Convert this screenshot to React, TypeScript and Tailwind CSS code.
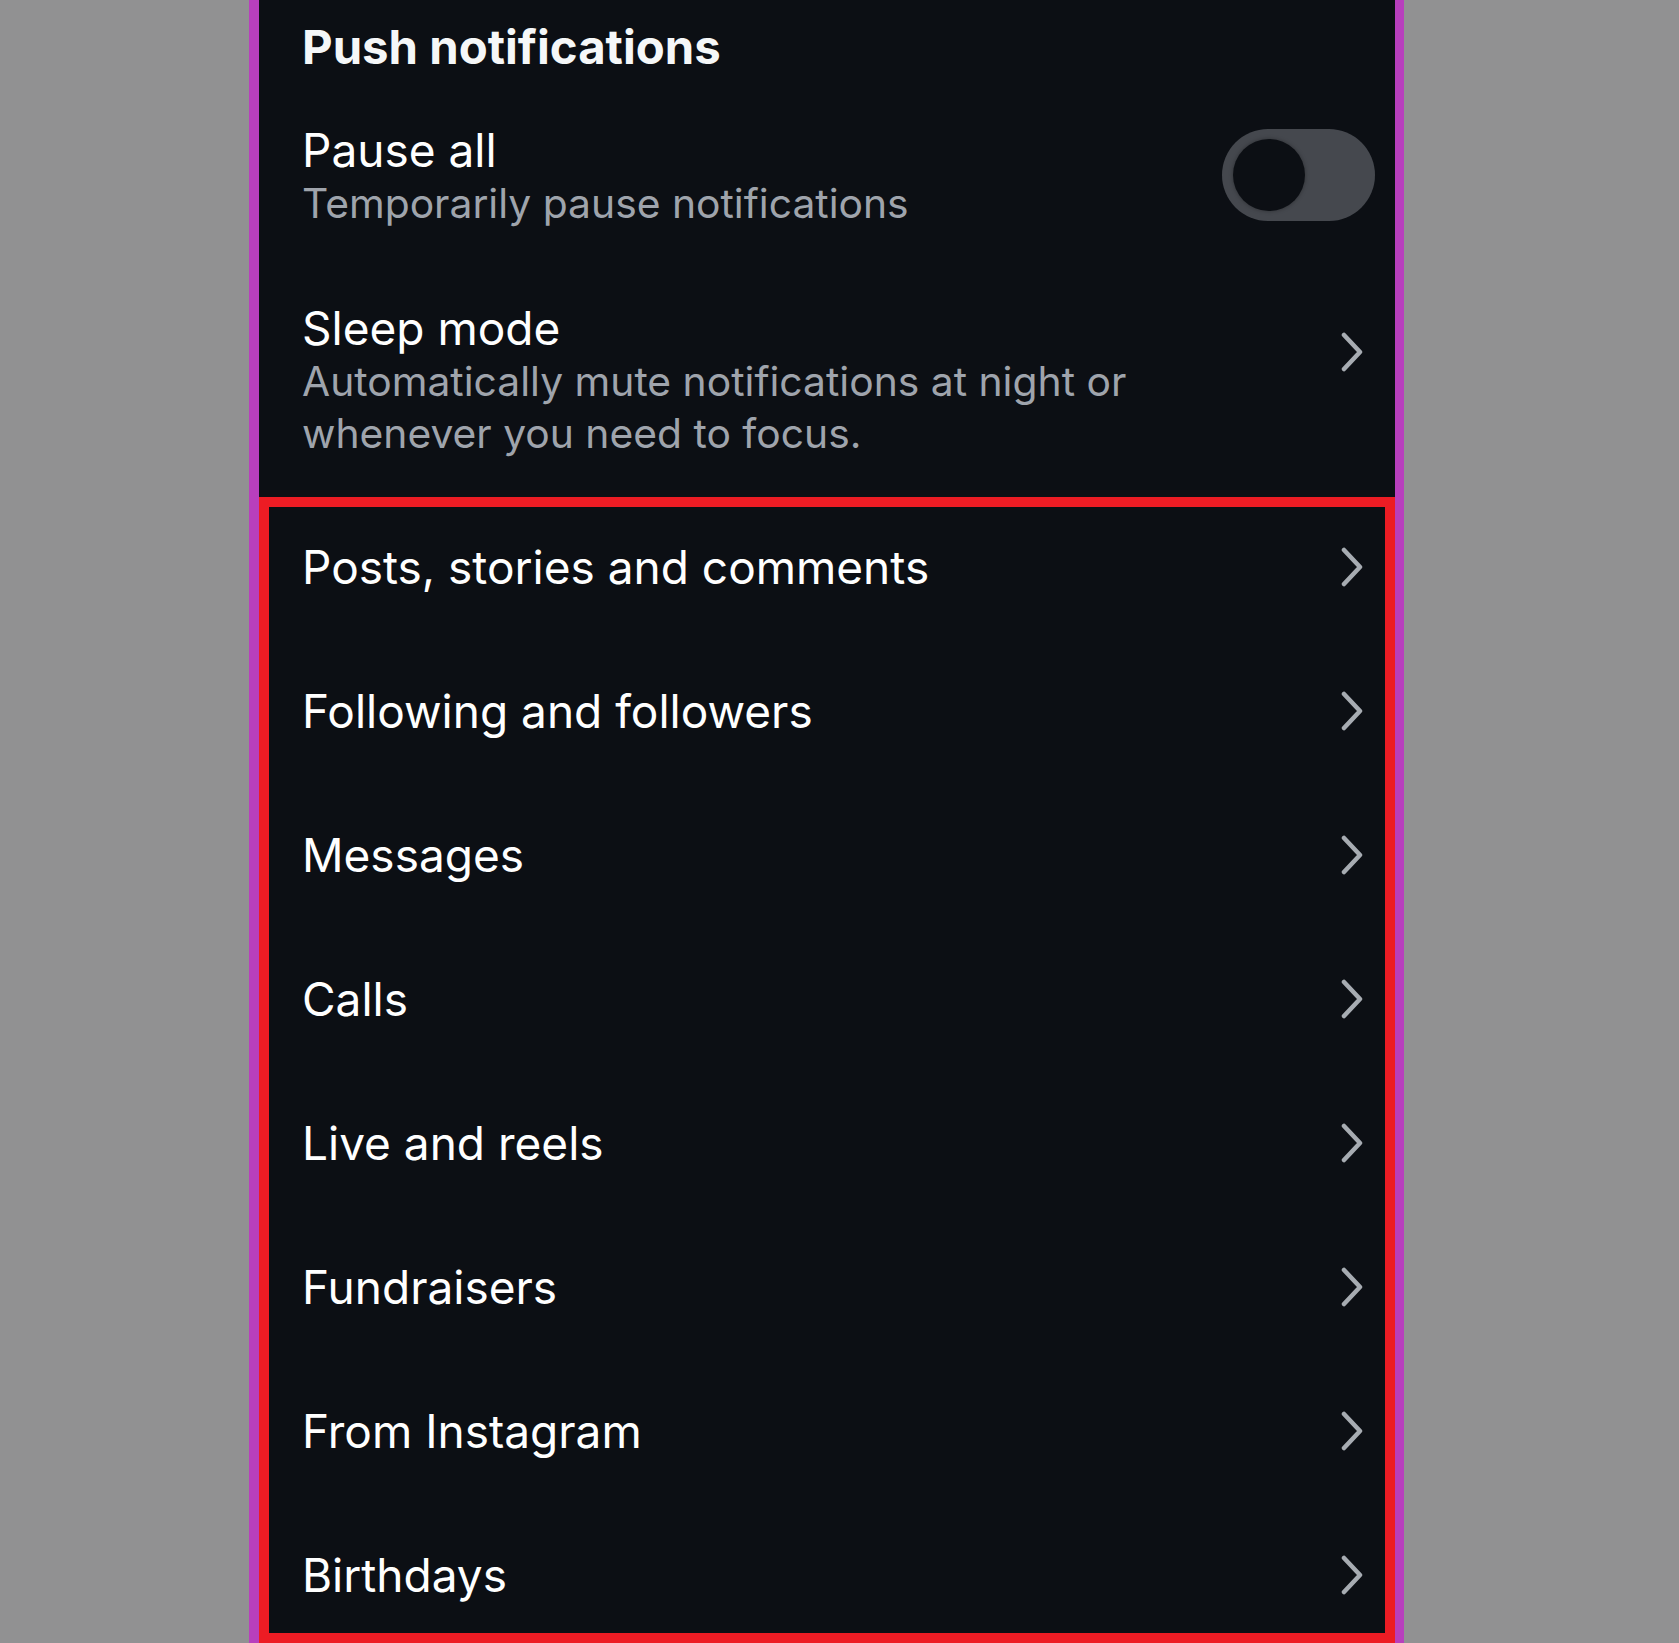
import React from 'react';

const rows = [
  'Posts, stories and comments',
  'Following and followers',
  'Messages',
  'Calls',
  'Live and reels',
  'Fundraisers',
  'From Instagram',
  'Birthdays',
];

const Chevron: React.FC<{ className?: string }> = ({ className }) => (
  <svg width="22" height="40" viewBox="0 0 22 40" className={className} fill="none">
    <polyline
      points="3,3 19,20 3,37"
      stroke="#a7acb2"
      strokeWidth="4.5"
      strokeLinecap="round"
      strokeLinejoin="round"
    />
  </svg>
);

const App: React.FC = () => {
  return (
    <div
      className="h-[1643px] overflow-hidden bg-[#919192] pl-[249px]"
      style={{ fontFamily: 'Inter, "Noto Sans", sans-serif' }}
    >
      <div className="relative h-full w-[1155px] border-l-[10px] border-r-[9px] border-[#b83fbd] bg-[#0c0f14]">
        {/* Header */}
        <div className="pl-[43px] pt-[19px]">
          <h1 className="text-[47.3px] font-bold leading-[56px] text-[#f5f7f8]">Push notifications</h1>
        </div>

        {/* Pause all */}
        <div className="mt-[49px] flex items-center pl-[43px] pr-[20px]">
          <div className="flex-1">
            <div className="text-[46px] leading-[52px] text-white">Pause all</div>
            <div className="mt-[1px] text-[40.8px] leading-[52px] text-[#9fa4ac]">Temporarily pause notifications</div>
          </div>
          <div className="mb-[4px] flex h-[92px] w-[153px] items-center rounded-full bg-[#45484e] pl-[11px]">
            <div className="h-[72px] w-[72px] rounded-full bg-[#0c0f14] shadow-[0_0_4px_rgba(0,0,0,0.35)]" />
          </div>
        </div>

        {/* Sleep mode */}
        <div className="mt-[73px] flex items-start pl-[43px] pr-[32px]">
          <div className="flex-1">
            <div className="text-[46px] leading-[52px] text-white">Sleep mode</div>
            <div className="mt-[1px] w-[900px] text-[40.8px] leading-[52px] text-[#9fa4ac]">
              Automatically mute notifications at night or whenever you need to focus.
            </div>
          </div>
          <Chevron className="mt-[30px]" />
        </div>

        {/* Category rows */}
        <div className="mt-[36px]">
          {rows.map((label) => (
            <div key={label} className="flex h-[144px] items-center justify-between pl-[43px] pr-[32px]">
              <span className="text-[46px] leading-[52px] text-white">{label}</span>
              <Chevron />
            </div>
          ))}
        </div>

        {/* Highlight box */}
        <div className="pointer-events-none absolute bottom-0 left-0 right-0 top-[497px] border-[10px] border-[#ed1c24]" />
      </div>
    </div>
  );
};

export default App;
